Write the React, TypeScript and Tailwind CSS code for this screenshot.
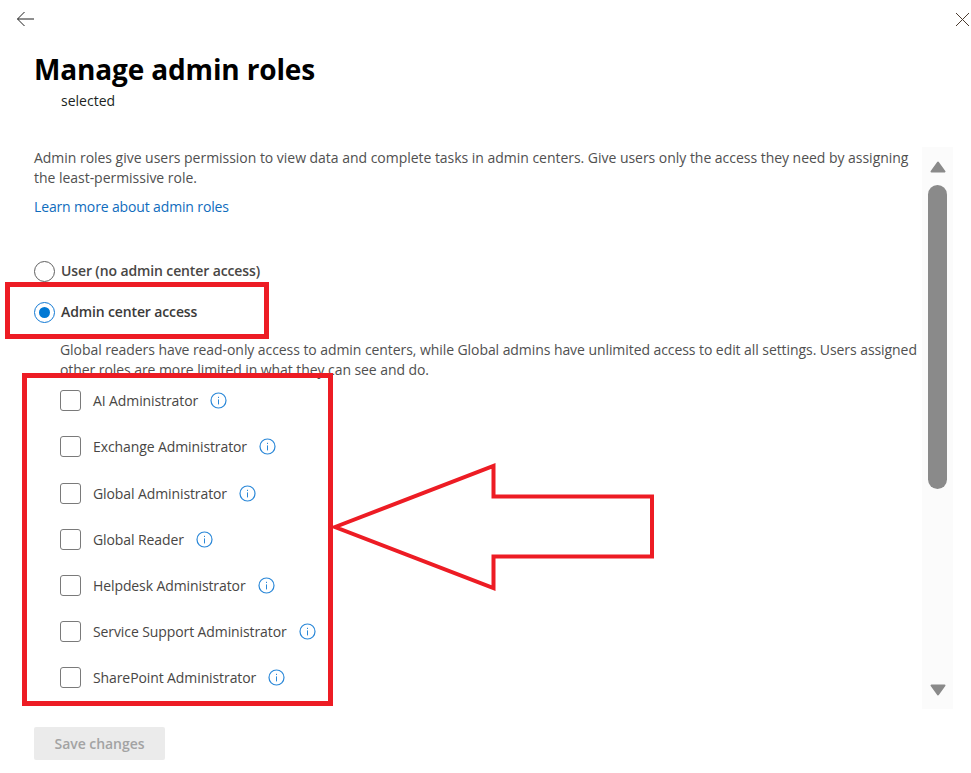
const roles = [
  { name: "AI Administrator", h: "h-[46px]" },
  { name: "Exchange Administrator", h: "h-[47px]" },
  { name: "Global Administrator", h: "h-[46px]" },
  { name: "Global Reader", h: "h-[46px]" },
  { name: "Helpdesk Administrator", h: "h-[46px]" },
  { name: "Service Support Administrator", h: "h-[46px]" },
  { name: "SharePoint Administrator", h: "h-[46px]" },
];

function InfoIcon() {
  return (
    <svg width="17" height="17" viewBox="0 0 17 17" fill="none" className="shrink-0">
      <circle cx="8.5" cy="8.5" r="7.5" stroke="#2b88d8" strokeWidth="1.2" />
      <rect x="8" y="7.4" width="1" height="5" fill="#2b88d8" />
      <rect x="8" y="4.8" width="1" height="1.2" fill="#2b88d8" />
    </svg>
  );
}

export default function App() {
  return (
    <div
      className="relative w-[971px] h-[773px] overflow-hidden bg-white text-[14px] text-[#323130]"
      style={{ fontFamily: '"Open Sans", "Noto Sans", sans-serif' }}
    >
      <div className="flex justify-between h-[38px] pl-[16px] pr-[1px] pt-[11px]">
        <svg width="19" height="16" viewBox="0 0 19 16" fill="none" stroke="#1f1f1f" strokeWidth="1">
          <path d="M18 8H1.5M8.5 1L1.5 8L8.5 15" />
        </svg>
        <svg width="16" height="16" viewBox="0 0 16 16" fill="none" stroke="#4a3a2e" strokeWidth="1">
          <path d="M2 2L15 15M15 2L2 15" />
        </svg>
      </div>

      <div className="flex">
        <div className="w-[922px] shrink-0 pl-[34px] h-[672px]">
          <h1 className="h-[49px] text-[28px] leading-[63px] font-bold text-black tracking-[-0.15px] whitespace-nowrap">
            Manage admin roles
          </h1>
          <div className="pl-[27px] h-[37px] text-[14px] leading-[28px] text-[#201f1e]">selected</div>
          <p className="h-[73px] pt-[24px] w-[885px] text-[14px] leading-[20px] tracking-[-0.03px] text-[#505050]">
            Admin roles give users permission to view data and complete tasks in admin centers. Give users only the access they need by assigning the least-permissive role.
          </p>
          <a className="block h-[54px] text-[14px] leading-[20px] tracking-[-0.14px] text-[#0f6cbd]">Learn more about admin roles</a>

          <label className="flex items-center gap-[6px] h-[41px]">
            <span className="w-[21px] h-[21px] rounded-full border border-[#5f5f5f] bg-white shrink-0" />
            <span className="pb-[2px] font-semibold text-[14px] tracking-[-0.12px] text-[#484644]">User (no admin center access)</span>
          </label>
          <label className="flex items-center gap-[6px] h-[41px]">
            <span className="flex items-center justify-center w-[21px] h-[21px] rounded-full border border-[#0f78d4] bg-white shrink-0">
              <span className="w-[11px] h-[11px] rounded-full bg-[#0078d4]" />
            </span>
            <span className="pb-[2px] font-semibold text-[14px] tracking-[-0.13px] text-[#3b3a39]">Admin center access</span>
          </label>

          <p className="ml-[26px] mt-[7px] h-[40px] w-[862px] text-[14px] leading-[20px] tracking-[-0.07px] text-[#505050]">
            Global readers have read-only access to admin centers, while Global admins have unlimited access to edit all settings. Users assigned other roles are more limited in what they can see and do.
          </p>

          <ul className="ml-[26px] mt-[-3px]">
            {roles.map((r) => (
              <li key={r.name} className={`flex items-center ${r.h}`}>
                <span className="w-[21px] h-[21px] rounded-[3px] border border-[#7a7a7a] bg-white shrink-0" />
                <span className="ml-[12px] text-[14px] tracking-[-0.1px] text-[#484644] whitespace-nowrap">{r.name}</span>
                <span className="ml-[12px]"><InfoIcon /></span>
              </li>
            ))}
          </ul>
        </div>

        <div className="relative flex flex-col items-center w-[31px] h-[562px] mt-[109px] bg-[#fbfbfb] shrink-0">
          <svg width="16" height="12" viewBox="0 0 16 12" className="mt-[14px] shrink-0" fill="#8a8a8a" stroke="#8a8a8a" strokeWidth="2" strokeLinejoin="round">
            <path d="M8 1.5L14.5 10.5H1.5Z" />
          </svg>
          <div className="w-[19px] h-[304px] mt-[12px] rounded-full bg-[#8a8a8a] shrink-0" />
          <svg width="16" height="12" viewBox="0 0 16 12" className="mt-[195px] shrink-0" fill="#8a8a8a" stroke="#8a8a8a" strokeWidth="2" strokeLinejoin="round">
            <path d="M1.5 1.5H14.5L8 10.5Z" />
          </svg>
        </div>
      </div>

      <button className="block ml-[34px] mt-[17px] w-[131px] h-[33px] rounded-[2px] bg-[#ebebeb] text-[14px] font-semibold tracking-[-0.05px] text-[#a3a3a3]">
        Save changes
      </button>

      {/* Red annotations drawn over the screenshot */}
      <div className="absolute left-[5px] top-[282px] w-[264px] h-[57px] border-[5px] border-[#ed1c24]" />
      <div className="absolute left-[22px] top-[373px] w-[311px] h-[333px] border-[5px] border-[#ed1c24]" />
      <svg className="absolute left-0 top-0 pointer-events-none" width="971" height="773" fill="none" stroke="#ed1c24" strokeWidth="4" strokeLinejoin="miter">
        <path d="M335 527L493.500 466V496.500H652V556.500H493.500V588Z" />
      </svg>
    </div>
  );
}
